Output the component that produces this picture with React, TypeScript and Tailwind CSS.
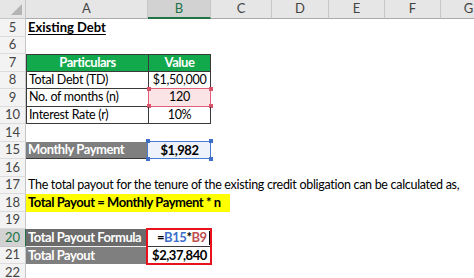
import React from "react";

const F = "font-['Lato','Open_Sans',sans-serif]";
const B = "font-bold tracking-[-0.45px]";

function RowHead({ n, active }: { n: number; active?: boolean }) {
  return (
    <div
      className={`w-[26px] shrink-0 flex items-center justify-center text-[13px] tracking-normal border-b border-r ${
        active
          ? "bg-[#d2d2d2] text-[#217346] border-b-[#c6c6c6] border-r-[#217346]"
          : "bg-[#f3f3f3] text-[#444] border-b-[#dcdcdc] border-r-[#c6c6c6]"
      }`}
    >
      {n}
    </div>
  );
}

function Row({ n, active, children }: { n: number; active?: boolean; children?: React.ReactNode }) {
  return (
    <div className="flex h-[17.5px] relative">
      <RowHead n={n} active={active} />
      <div className="flex flex-1 relative">{children}</div>
    </div>
  );
}

function Handle({ pos, color }: { pos: string; color: string }) {
  return <div className={`absolute w-[4px] h-[4px] ${color} ${pos}`} />;
}

export default function App() {
  const cols: [string, string, boolean][] = [
    ["A", "w-[122px]", false],
    ["B", "w-[63px]", true],
    ["C", "w-[61px]", false],
    ["D", "w-[57px]", false],
    ["E", "w-[56px]", false],
    ["F", "w-[56px]", false],
    ["G", "w-[56px]", false],
  ];
  return (
    <div className={`w-[474px] h-[278px] overflow-hidden bg-white ${F} text-[13px] text-black`}>
      {/* column header */}
      <div className="flex h-[19.25px]">
        <div className="w-[26px] shrink-0 bg-[#e6e6e6] border-r border-b border-[#c6c6c6] relative">
          <svg className="absolute right-[3px] bottom-[3px]" width="11" height="11" viewBox="0 0 11 11">
            <polygon points="11,0 11,11 0,11" fill="#b4b4b4" />
          </svg>
        </div>
        {cols.map(([l, w, sel]) => (
          <div
            key={l}
            className={`${w} shrink-0 flex items-center justify-center text-[13px] border-r ${
              sel
                ? "bg-[#d2d2d2] text-[#217346] border-b-2 border-b-[#217346] border-r-[#c6c6c6]"
                : "bg-[#e6e6e6] text-[#444] border-b border-b-[#ababab] border-r-[#c6c6c6]"
            }`}
          >
            {l}
          </div>
        ))}
      </div>

      {/* row 5 */}
      <Row n={5}>
        <div className="pl-[2px] flex items-center font-bold tracking-[0px] underline underline-offset-2 whitespace-nowrap">
          Existing Debt
        </div>
      </Row>
      <Row n={6} />

      {/* row 7 */}
      <Row n={7}>
        <div className={`w-[122px] shrink-0 bg-[#12a84c] text-white ${B} flex items-center justify-center border border-[#3a3a3a] border-r-0`}>
          Particulars
        </div>
        <div className={`w-[63px] shrink-0 bg-[#12a84c] text-white ${B} flex items-center justify-center border border-[#3a3a3a]`}>
          Value
        </div>
      </Row>
      <Row n={8}>
        <div className="w-[122px] shrink-0 flex items-center pl-[2px] text-[12.5px] tracking-[-0.3px] border-l border-b border-[#3a3a3a] whitespace-nowrap">
          Total Debt (TD)
        </div>
        <div className="w-[63px] shrink-0 flex items-center justify-center text-[12.5px] tracking-[-0.3px] border-l border-r border-b border-[#3a3a3a]">
          $1,50,000
        </div>
      </Row>
      <Row n={9}>
        <div className="w-[122px] shrink-0 flex items-center pl-[2px] text-[12.5px] tracking-[-0.3px] border-l border-b border-[#3a3a3a] whitespace-nowrap">
          No. of months (n)
        </div>
        <div className="w-[63px] shrink-0 flex items-center justify-center text-[12.5px] tracking-[-0.3px] border-l border-r border-b border-[#3a3a3a] relative bg-[#fbe4e6]">
          120
          <div className="absolute -left-[1px] -right-[1px] -top-[1px] -bottom-[1px] border border-[#e0607a]" />
          <Handle color="bg-[#d9536a]" pos="-left-[2.5px] -top-[2.5px]" />
          <Handle color="bg-[#d9536a]" pos="-right-[2.5px] -top-[2.5px]" />
          <Handle color="bg-[#d9536a]" pos="-left-[2.5px] -bottom-[2.5px]" />
          <Handle color="bg-[#d9536a]" pos="-right-[2.5px] -bottom-[2.5px]" />
        </div>
      </Row>
      <Row n={10}>
        <div className="w-[122px] shrink-0 flex items-center pl-[2px] text-[12.5px] tracking-[-0.3px] border-l border-b border-[#3a3a3a] whitespace-nowrap">
          Interest Rate (r)
        </div>
        <div className="w-[63px] shrink-0 flex items-center justify-center text-[12.5px] tracking-[-0.3px] border-l border-r border-b border-[#3a3a3a]">
          10%
        </div>
      </Row>
      <Row n={14} />

      {/* row 15 */}
      <Row n={15}>
        <div className={`w-[122px] shrink-0 bg-[#7f7f7f] text-white ${B} flex items-center pl-[2px] border-b border-[#3a3a3a] whitespace-nowrap`}>
          Monthly Payment
        </div>
        <div className={`w-[63px] shrink-0 flex items-center justify-center ${B} relative bg-[#eef3fb]`}>
          $1,982
          <div className="absolute -left-[1px] right-0 -top-[1px] bottom-0 border border-[#4a7bd0]" />
          <Handle color="bg-[#3f6fc8]" pos="-left-[2.5px] -top-[2.5px]" />
          <Handle color="bg-[#3f6fc8]" pos="-right-[1.5px] -top-[2.5px]" />
          <Handle color="bg-[#3f6fc8]" pos="-left-[2.5px] -bottom-[1.5px]" />
          <Handle color="bg-[#3f6fc8]" pos="-right-[1.5px] -bottom-[1.5px]" />
        </div>
      </Row>
      <Row n={16} />
      <Row n={17}>
        <div className="pl-[2px] flex items-center text-[12.5px] tracking-[-0.3px] whitespace-nowrap">
          The total payout for the tenure of the existing credit obligation can be calculated as,
        </div>
      </Row>
      <Row n={18}>
        <div className={`w-[204px] shrink-0 bg-[#ffff00] pl-[2px] flex items-center ${B} whitespace-nowrap`}>
          Total Payout = Monthly Payment * n
        </div>
      </Row>
      <Row n={19} />

      {/* rows 20-21 */}
      <Row n={20} active>
        <div className={`w-[122px] shrink-0 bg-[#6b6b6b] text-white ${B} flex items-center pl-[2px] border-b border-[#f0f0f0] whitespace-nowrap`}>
          Total Payout Formula
        </div>
        <div className={`w-[63px] shrink-0 flex items-center pl-[9px] ${B} relative border-b border-[#3a3a3a]`}>
          <span>=</span>
          <span className="text-[#3c6fc9]">B15</span>
          <span>*</span>
          <span className="text-[#c0504d]">B9</span>
          <span className="w-[1px] h-[14px] bg-black ml-[2px]" />
          <div className="absolute -left-[2px] -right-[1px] -top-[1px] h-[36.5px] border-2 border-[#e8121d] z-10" />
        </div>
      </Row>
      <Row n={21}>
        <div className={`w-[122px] shrink-0 bg-[#7f7f7f] text-white ${B} flex items-center pl-[2px] whitespace-nowrap`}>
          Total Payout
        </div>
        <div className={`w-[63px] shrink-0 flex items-center justify-center ${B}`}>$2,37,840</div>
      </Row>
      <Row n={22} />
    </div>
  );
}
